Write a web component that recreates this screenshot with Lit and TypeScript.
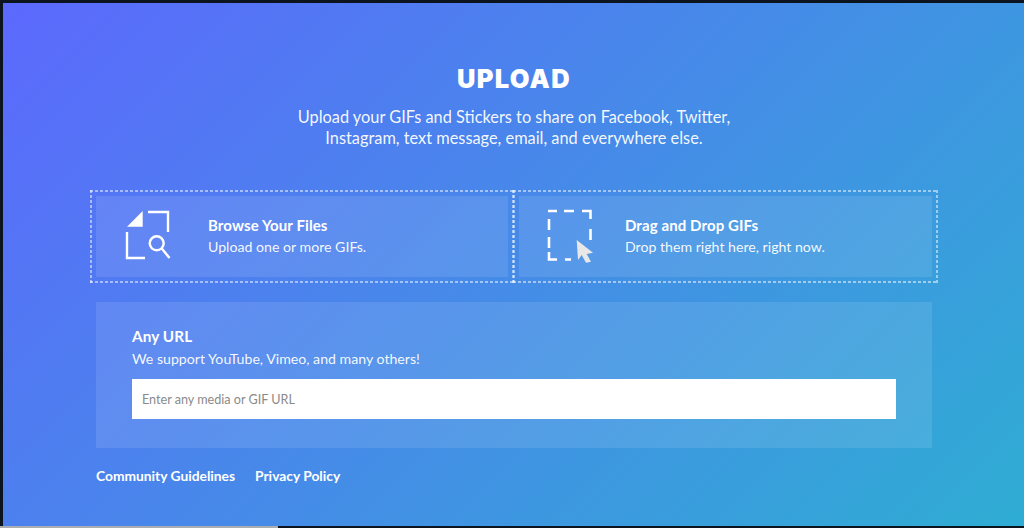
import { LitElement, html, css } from "lit";
import { customElement } from "lit/decorators.js";

@customElement("app-root")
export class AppRoot extends LitElement {
  static styles = css`
    :host {
      display: flex;
      flex-direction: column;
      height: 528px;
      background: #0c1420;
      padding: 3px 0 0 3px;
      box-sizing: border-box;
      overflow: hidden;
      font-family: "Lato", "Noto Sans", sans-serif;
      color: #fff;
    }
    .page {
      flex: 1;
      background: linear-gradient(135deg, #5c69fd 0%, #2fadd3 100%);
      padding: 61px 92px 0 93px;
      display: flex;
      flex-direction: column;
      align-items: stretch;
      min-height: 0;
    }
    h1 {
      margin: 0;
      font-family: "Inter", sans-serif;
      font-size: 25.5px;
      line-height: 30px;
      font-weight: 900;
      letter-spacing: 1.3px;
      text-align: center;
    }
    .lead {
      margin: 12px 0 0;
      font-size: 16.35px;
      line-height: 21px;
      text-align: center;
      color: rgba(255, 255, 255, 0.95);
    }
    .sources {
      display: grid;
      grid-template-columns: 424px 424px;
      margin: 42px -6px 0;
    }
    .drop {
      --d: rgba(255, 255, 255, 0.5);
      padding: 6px;
      height: 93px;
      box-sizing: border-box;
      background:
        repeating-linear-gradient(90deg, var(--d) 0 3px, transparent 3px 5px) top / 100% 2px no-repeat,
        repeating-linear-gradient(90deg, var(--d) 0 3px, transparent 3px 5px) bottom / 100% 2px no-repeat,
        repeating-linear-gradient(0deg, var(--d) 0 3px, transparent 3px 5px) left / 2px 100% no-repeat,
        repeating-linear-gradient(0deg, var(--d) 0 3px, transparent 3px 5px) right / 2px 100% no-repeat;
    }
    .drop + .drop {
      margin-left: -1px;
    }
    .card {
      height: 100%;
      box-sizing: border-box;
      display: flex;
      align-items: center;
      background: rgba(255, 255, 255, 0.1);
      padding-bottom: 2px;
    }
    .card.browse {
      padding-left: 28px;
    }
    .card.drag {
      padding-left: 22px;
    }
    .card svg {
      flex: none;
      display: block;
    }
    .title {
      font-size: 15px;
      line-height: 22px;
      font-weight: 700;
      letter-spacing: 0.1px;
    }
    .sub {
      font-size: 14.15px;
      line-height: 22px;
      color: rgba(255, 255, 255, 0.95);
    }
    .url {
      margin-top: 19px;
      height: 146px;
      box-sizing: border-box;
      padding: 23px 36px 0;
      background: rgba(255, 255, 255, 0.1);
    }
    .url .title {
      font-size: 15.3px;
      line-height: 23px;
    }
    input {
      display: block;
      box-sizing: border-box;
      width: 100%;
      height: 40px;
      margin-top: 9px;
      border: 0;
      padding: 0 10px;
      background: #fff;
      font: 12.6px "Lato", sans-serif;
      color: #333;
      outline: none;
    }
    input::placeholder {
      color: #8a8a8a;
      opacity: 1;
    }
    .links {
      display: flex;
      gap: 20px;
      margin-top: 19px;
      font-size: 13.8px;
      line-height: 18px;
      font-weight: 700;
    }
    .links a {
      color: #fff;
      text-decoration: none;
    }
    .progress {
      flex: none;
      height: 2px;
      margin-left: -3px;
      background: #0c1420;
    }
    .progress div {
      width: 278px;
      height: 100%;
      background: rgba(255, 255, 255, 0.65);
    }
  `;

  render() {
    return html`
      <main class="page">
        <h1>UPLOAD</h1>
        <p class="lead">
          Upload your GIFs and Stickers to share on Facebook, Twitter,<br />
          Instagram, text message, email, and everywhere else.
        </p>
        <section class="sources">
          <div class="drop">
            <div class="card browse">
              <svg width="84" height="60" viewBox="124 206 84 60" fill="none" stroke="#fff" stroke-width="2.4">
                <path d="M127 226.7 142.7 211V226.7Z" fill="#fff" stroke="none" />
                <path d="M148 212H168V232" />
                <path d="M127 232V258H145" />
                <circle cx="156.7" cy="243.3" r="7" />
                <path d="M161.8 248.5 169.5 258" />
              </svg>
              <div>
                <div class="title">Browse Your Files</div>
                <div class="sub">Upload one or more GIFs.</div>
              </div>
            </div>
          </div>
          <div class="drop">
            <div class="card drag">
              <svg width="84" height="60" viewBox="541 206 84 60" fill="none" stroke="#fff" stroke-width="2.6">
                <path d="M548 211H557M564 211H574M582 211H590.5V219M590.5 229V240" />
                <path d="M549 219V230M549 237V248M549 252V259.5H557M565 259.5H571" />
                <path d="M576.7 240 593 252.7 586.7 254 591 261.7 586 262.7 581.7 255 578 260Z" fill="#e8e8e8" stroke="none" />
              </svg>
              <div>
                <div class="title">Drag and Drop GIFs</div>
                <div class="sub">Drop them right here, right now.</div>
              </div>
            </div>
          </div>
        </section>
        <section class="url">
          <div class="title">Any URL</div>
          <div class="sub">We support YouTube, Vimeo, and many others!</div>
          <input type="text" placeholder="Enter any media or GIF URL" />
        </section>
        <nav class="links">
          <a href="#">Community Guidelines</a>
          <a href="#">Privacy Policy</a>
        </nav>
      </main>
      <div class="progress"><div></div></div>
    `;
  }
}
